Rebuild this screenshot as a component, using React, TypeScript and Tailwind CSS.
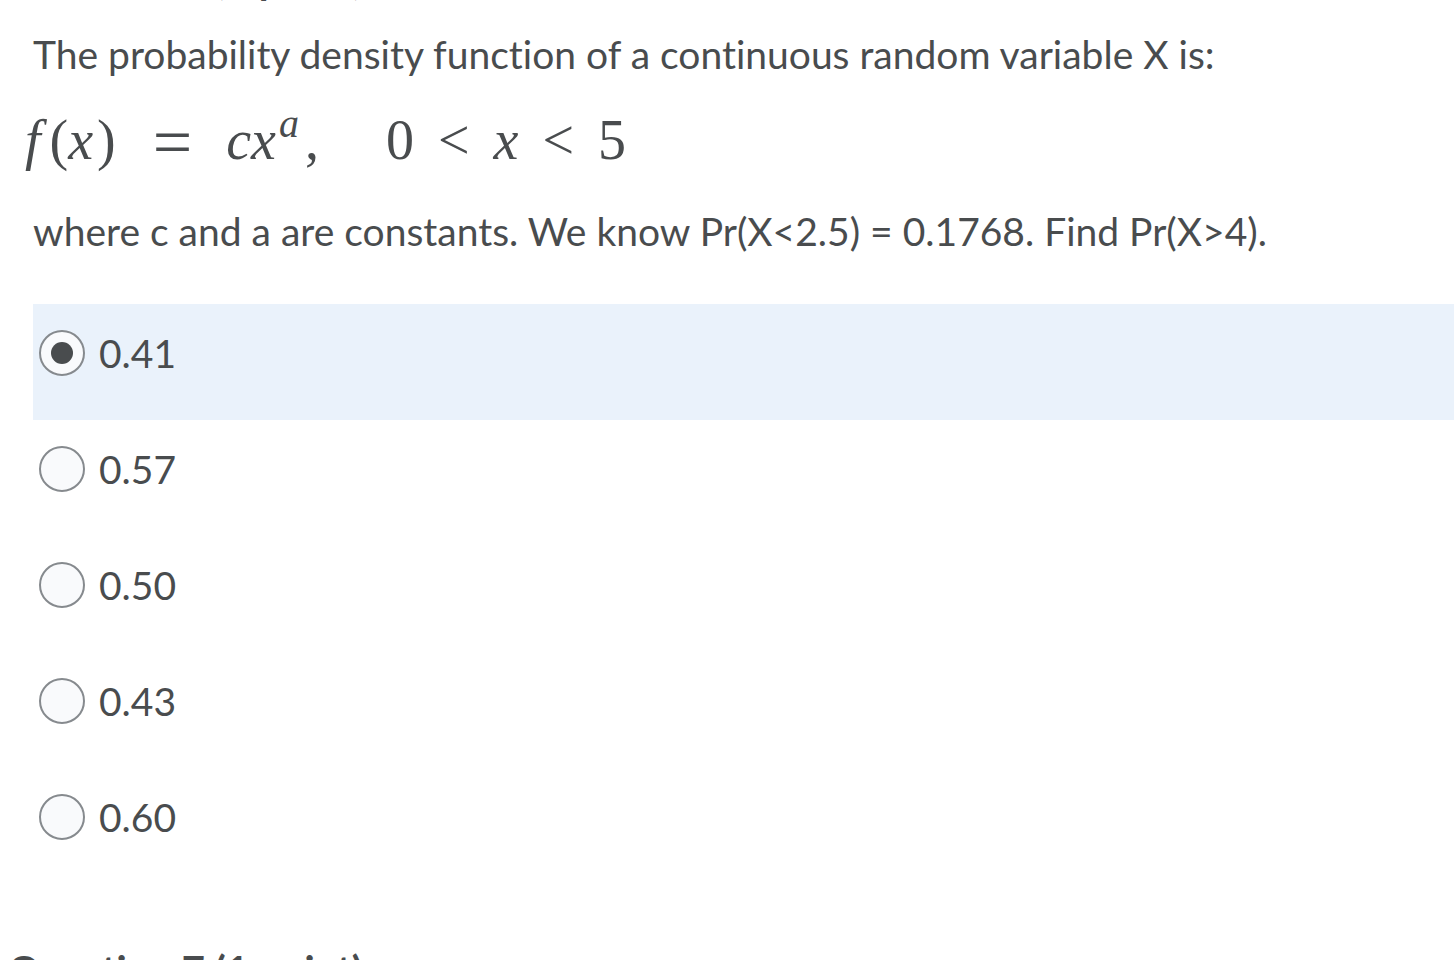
import React from 'react';

const options = [
  { label: '0.41', checked: true },
  { label: '0.57', checked: false },
  { label: '0.50', checked: false },
  { label: '0.43', checked: false },
  { label: '0.60', checked: false },
];

function Radio({ checked }: { checked: boolean }) {
  return (
    <span className="flex h-[46px] w-[46px] shrink-0 items-center justify-center rounded-full border-2 border-[#868a8e] bg-[#f9fafc]">
      {checked && <span className="h-[22px] w-[22px] rounded-full bg-[#494c4e]" />}
    </span>
  );
}

export default function App() {
  return (
    <div
      className="min-h-screen overflow-hidden bg-white text-[#494c4e] [font-variant-ligatures:none]"
      style={{ fontFamily: 'Lato, "Noto Sans", sans-serif' }}
    >
      {/* previous question header, cut off by the screenshot */}
      <div className="-mt-[41px] h-[40px] whitespace-nowrap pl-[8px] text-[40px] font-bold leading-[40px]">
        Question 6 (1 point)
      </div>

      <div className="pl-[33px] pt-[35px]">
        <p className="text-[39px] leading-[40px]">The probability density function of a continuous random variable X is:</p>

        {/* formula */}
        <div
          className="-ml-[8px] mt-[32px] flex h-[60px] items-baseline text-[56px] leading-[60px]"
          style={{ fontFamily: '"Liberation Serif", "DejaVu Serif", serif' }}
        >
          <span className="italic">f</span>
          <span className="ml-[9px]">(</span>
          <span className="italic">x</span>
          <span className="ml-[4px]">)</span>
          <span className="relative top-[7px] ml-[37px] text-[70px] leading-[60px]">=</span>
          <span className="ml-[34px] italic">cx</span>
          <span className="relative -top-[22px] ml-[3px] text-[40px] italic">a</span>
          <span className="ml-[6px]">,</span>
          <span className="ml-[67px]">0</span>
          <span className="ml-[24px]">&lt;</span>
          <span className="ml-[24px] italic">x</span>
          <span className="ml-[24px]">&lt;</span>
          <span className="ml-[24px]">5</span>
        </div>

        <p className="mt-[45px] text-[39px] leading-[40px]">
          where c and a are constants. We know Pr(X&lt;2.5) = 0.1768. Find Pr(X&gt;4).
        </p>

        <div className="mt-[53px] flex flex-col">
          {options.map((o) => (
            <label
              key={o.label}
              className={`flex h-[116px] items-center gap-[14px] pb-[18px] pl-[6px] ${o.checked ? 'bg-[#eaf2fb]' : ''}`}
            >
              <Radio checked={o.checked} />
              <span className="text-[39px] leading-[40px]">{o.label}</span>
            </label>
          ))}
        </div>
      </div>

      {/* next question header, cut off by the screenshot */}
      <div className="mt-[66px] whitespace-nowrap pl-[8px] text-[40px] font-bold leading-[40px]">Question 7 (1 point)</div>
    </div>
  );
}
